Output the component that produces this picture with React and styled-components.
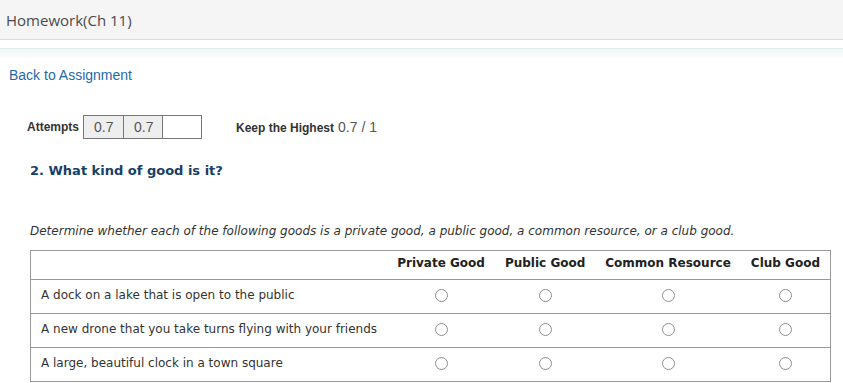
import React from 'react';
import styled, { createGlobalStyle } from 'styled-components';

const GlobalStyle = createGlobalStyle`
  html, body {
    margin: 0;
    padding: 0;
    background: #fff;
  }
`;

const Page = styled.div`
  width: 843px;
  min-height: 383px;
  overflow: hidden;
`;

const TopBar = styled.div`
  height: 39px;
  background: #f5f5f5;
  border-bottom: 1px solid #dcdcdc;
  display: flex;
  align-items: center;
  padding-left: 6px;
  font-family: "Open Sans", sans-serif;
  font-size: 15px;
  color: #4a4a4a;
`;

const Band = styled.div`
  margin-top: 8px;
  height: 9px;
  border-top: 1px solid #e2ebee;
  background: linear-gradient(#f3f7f7, #fbfcfc);
`;

const BackLink = styled.a`
  display: block;
  margin: 9px 0 0 9px;
  font-family: "Liberation Sans", Arial, sans-serif;
  font-size: 14px;
  color: #1f6aa5;
  text-decoration: none;
`;

const AttemptsRow = styled.div`
  display: flex;
  align-items: center;
  margin: 32px 0 0 27px;
  font-family: "Liberation Sans", Arial, sans-serif;
`;

const Label = styled.span`
  font-size: 12px;
  font-weight: bold;
  color: #333;
  margin-right: 4px;
`;

const Boxes = styled.div`
  display: flex;
  border: 1px solid #777;
  height: 22px;
`;

const Box = styled.div`
  width: 39px;
  display: flex;
  align-items: center;
  padding-left: 10px;
  box-sizing: border-box;
  font-size: 14px;
  color: #555;
  background: ${p => (p.$filled ? '#eeeeee' : '#ffffff')};
  & + & {
    border-left: 1px solid #777;
  }
`;

const Highest = styled.div`
  margin-left: 34px;
  font-size: 14px;
  color: #555;
`;

const Question = styled.h2`
  margin: 24px 0 0 30px;
  font-family: Verdana, "DejaVu Sans", sans-serif;
  font-size: 13px;
  font-weight: bold;
  color: #183f66;
`;

const Prompt = styled.p`
  margin: 46px 0 0 30px;
  font-family: Verdana, "DejaVu Sans", sans-serif;
  font-size: 12px;
  font-style: italic;
  color: #333;
`;

const Table = styled.table`
  margin: 12px 0 0 30px;
  width: 801px;
  border-collapse: collapse;
  border: 1px solid #999;
  font-family: Verdana, "DejaVu Sans", sans-serif;
  font-size: 12px;
  color: #333;
`;

const Th = styled.th`
  height: 24px;
  padding: 0 10px 4px;
  font-size: 12px;
  font-weight: bold;
  color: #222;
  white-space: nowrap;
  text-align: center;
  vertical-align: middle;
  border-bottom: 1px solid #999;
`;

const Tr = styled.tr`
  & + & td {
    border-top: 1px solid #999;
  }
`;

const Td = styled.td`
  height: 29px;
  padding: 0 10px 4px;
  text-align: ${p => (p.$center ? 'center' : 'left')};
  vertical-align: middle;
  line-height: 14px;
`;

const Radio = styled.input.attrs({ type: 'radio' })`
  appearance: none;
  -webkit-appearance: none;
  display: inline-block;
  margin: 0;
  width: 13px;
  height: 13px;
  border: 1px solid #8f8f8f;
  border-radius: 50%;
  background: #fff;
  vertical-align: middle;
`;

const columns = ['Private Good', 'Public Good', 'Common Resource', 'Club Good'];

const goods = [
  'A dock on a lake that is open to the public',
  'A new drone that you take turns flying with your friends',
  'A large, beautiful clock in a town square',
];

export default function App() {
  return (
    <Page>
      <GlobalStyle />
      <TopBar>Homework(Ch 11)</TopBar>
      <Band />
      <BackLink href="#">Back to Assignment</BackLink>
      <AttemptsRow>
        <Label>Attempts</Label>
        <Boxes>
          <Box $filled>0.7</Box>
          <Box $filled>0.7</Box>
          <Box />
        </Boxes>
        <Highest>
          <Label>Keep the Highest</Label>0.7 / 1
        </Highest>
      </AttemptsRow>
      <Question>2. What kind of good is it?</Question>
      <Prompt>
        Determine whether each of the following goods is a private good, a public good, a common
        resource, or a club good.
      </Prompt>
      <Table>
        <thead>
          <tr>
            <Th style={{ width: '100%' }} />
            {columns.map(c => (
              <Th key={c}>{c}</Th>
            ))}
          </tr>
        </thead>
        <tbody>
          {goods.map((g, i) => (
            <Tr key={g}>
              <Td>{g}</Td>
              {columns.map(c => (
                <Td $center key={c}>
                  <Radio name={`good-${i}`} aria-label={c} />
                </Td>
              ))}
            </Tr>
          ))}
        </tbody>
      </Table>
    </Page>
  );
}
